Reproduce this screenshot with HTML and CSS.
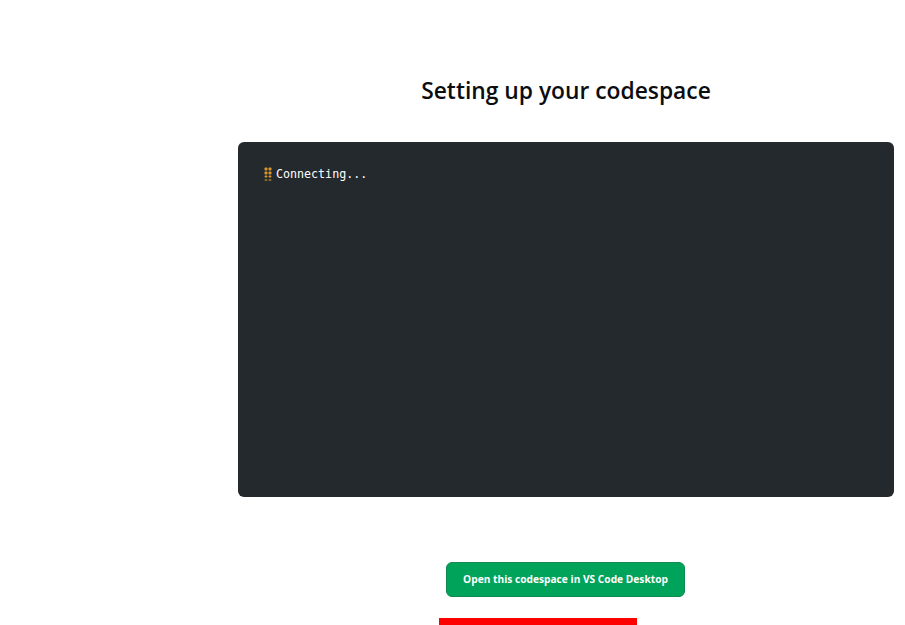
FILE: index.html
```html
<!DOCTYPE html>
<html lang="en">
<head>
<meta charset="utf-8">
<title>Setting up your codespace</title>
<link rel="stylesheet" href="styles.css">
</head>
<body>
<main class="page">
  <h1 class="title">Setting up your codespace</h1>
  <section class="terminal">
    <div class="line">
      <svg class="spinner" width="8" height="15" viewBox="0 0 8 15" aria-hidden="true">
        <g fill="#d9962b">
          <rect x="0.5" y="0.5" width="3" height="3" rx="1"/><rect x="4.5" y="0.5" width="3" height="3" rx="1"/>
          <rect x="0.5" y="4.5" width="3" height="3" rx="1"/><rect x="4.5" y="4.5" width="3" height="3" rx="1"/>
          <rect x="0.5" y="8.5" width="3" height="2" rx="1"/><rect x="4.5" y="8.5" width="3" height="2" rx="1"/>
        </g>
        <g fill="#8a6a2c">
          <rect x="0.5" y="12" width="3" height="2" rx="1"/><rect x="4.5" y="12" width="3" height="2" rx="1"/>
        </g>
      </svg>
      <span class="text">Connecting...</span>
    </div>
  </section>
  <div class="actions">
    <button class="open" type="button">Open this codespace in VS Code Desktop</button>
  </div>
  <div class="marker"></div>
</main>
</body>
</html>
```
FILE: styles.css
```css
html, body {
  margin: 0;
  padding: 0;
  background: #ffffff;
  overflow: hidden;
}
.page {
  height: 625px;
  box-sizing: border-box;
  padding: 72px 11px 0 238px;
  display: flex;
  flex-direction: column;
  font-family: "Open Sans", "Noto Sans", sans-serif;
}
.title {
  margin: 0;
  height: 70px;
  font-size: 22.8px;
  line-height: 37px;
  font-weight: 600;
  text-align: center;
  color: #0b0d10;
}
.terminal {
  height: 355px;
  box-sizing: border-box;
  padding: 25px 26px;
  background: #24292e;
  border-radius: 6px;
}
.line {
  display: flex;
  align-items: center;
  gap: 4px;
  height: 15px;
}
.spinner {
  flex: none;
}
.text {
  font-family: "DejaVu Sans Mono", "Liberation Mono", monospace;
  font-size: 11.67px;
  line-height: 15px;
  color: #ffffff;
}
.actions {
  display: flex;
  justify-content: center;
  margin-top: 65px;
  padding-right: 1px;
}
.open {
  width: 239px;
  height: 35px;
  padding: 0 0 2px;
  border: 1px solid #0f8a50;
  border-radius: 6px;
  background: #00a35a;
  color: #ffffff;
  font-family: "Open Sans", "Noto Sans", sans-serif;
  font-size: 10.2px;
  font-weight: 700;
}
.marker {
  width: 198px;
  height: 7px;
  margin: 21px 0 0 201px;
  background: #ff0000;
}
```
